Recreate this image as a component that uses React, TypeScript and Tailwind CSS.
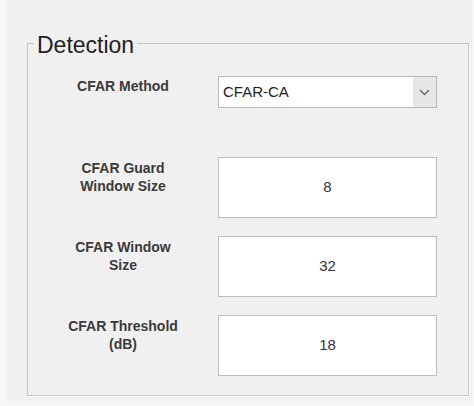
const rows = [
  { label: ["CFAR Guard", "Window Size"], value: "8" },
  { label: ["CFAR Window", "Size"], value: "32" },
  { label: ["CFAR Threshold", "(dB)"], value: "18" },
];

export default function App() {
  return (
    <div
      className="w-[474px] h-[406px] bg-[#f7f7f7] pl-[7px] pr-[2px] pb-[5px]"
      style={{ fontFamily: '"Liberation Sans", Arial, sans-serif' }}
    >
      <div className="h-full bg-[#f0f0f0] pt-[28px] pl-[20px] pr-[3px]">
        <fieldset className="w-[442px] h-[368px] border border-[#c6c6c6] shadow-[1px_1px_0_#fafafa]">
          <legend className="ml-[6px] px-[3px] pt-[4px] text-[23px] leading-[26px] text-[#222]">
            Detection
          </legend>

          <div className="flex flex-col mt-[18px]">
            {/* method */}
            <div className="flex items-start">
              <div className="w-[190px] pt-[1px] text-center text-[14px] leading-[18px] font-bold text-[#3a3a3a]">
                CFAR Method
              </div>
              <div className="flex w-[219px] h-[32px] border border-[#b9b9b9] bg-white">
                <div className="flex-1 flex items-center pl-[4px] text-[15px] text-[#222]">
                  CFAR-CA
                </div>
                <div className="w-[23px] flex items-center justify-center bg-[#e6e6e6]">
                  <svg width="11" height="7" viewBox="0 0 11 7" fill="none">
                    <path d="M1 1L5.5 5.5L10 1" stroke="#666" strokeWidth="1.4" />
                  </svg>
                </div>
              </div>
            </div>

            <div className="flex flex-col gap-[18px] mt-[49px]">
              {rows.map((r) => (
                <div key={r.value} className="flex items-start">
                  <div className="w-[190px] pt-[2px] text-center text-[14px] leading-[18px] font-bold text-[#3a3a3a]">
                    {r.label[0]}
                    <br />
                    {r.label[1]}
                  </div>
                  <div className="w-[219px] h-[61px] border border-[#bdbdbd] bg-white flex items-center justify-center text-[15px] text-[#333]">
                    {r.value}
                  </div>
                </div>
              ))}
            </div>
          </div>
        </fieldset>
      </div>
    </div>
  );
}
